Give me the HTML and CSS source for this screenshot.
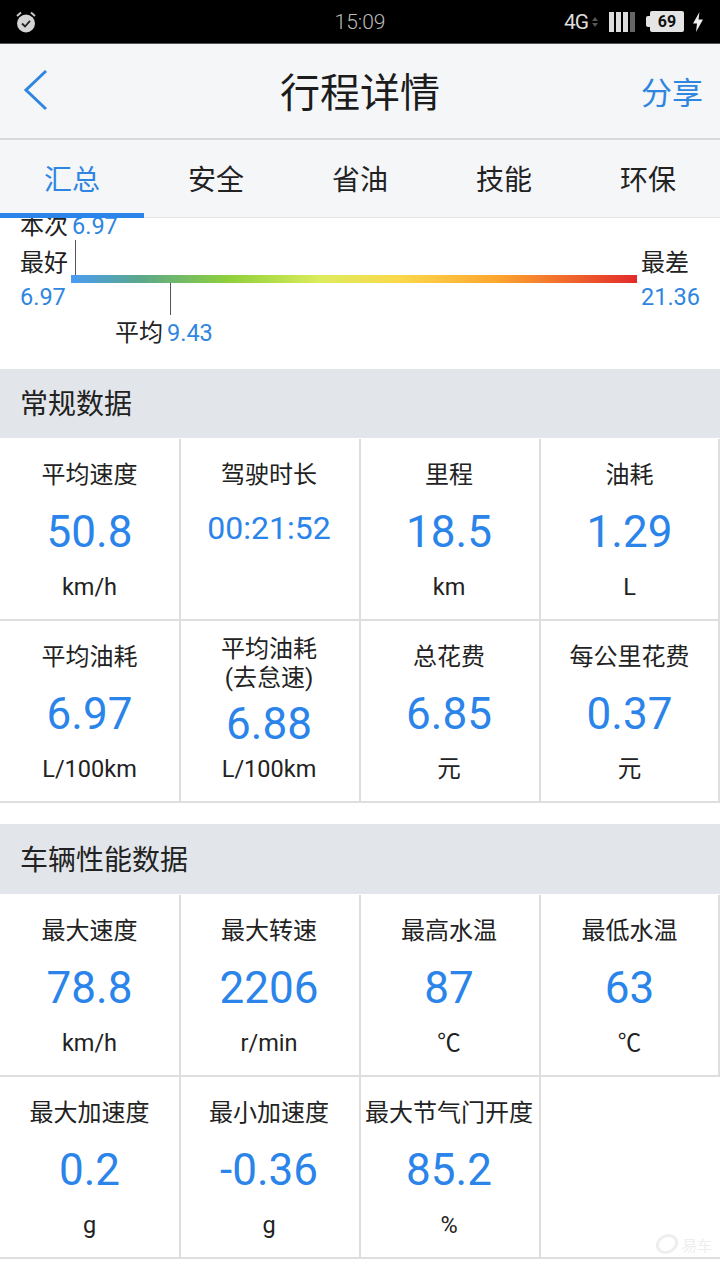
FILE: index.html
```html
<!DOCTYPE html>
<html lang="zh-CN">
<head>
    <meta charset="UTF-8">
    <meta name="viewport" content="width=device-width, initial-scale=1.0">
    <title>行程详情</title>
    <link rel="stylesheet" href="styles.css">
</head>
<body>

<div class="status-bar">
    <svg class="alarm" width="22" height="24" viewBox="0 0 22 24">
        <path d="M2 6 L6 2.5 M20 6 L16 2.5" stroke="#c8c8c8" stroke-width="2" fill="none"/>
        <circle cx="11" cy="13.5" r="9" fill="#d4d4d4"/>
        <path d="M7 13.5 L10 16.5 L15 10.8" stroke="#222" stroke-width="1.8" fill="none"/>
    </svg>
    <span class="clock">15:09</span>
    <div class="status-right">
        <span class="net">4G</span>
        <svg width="8" height="12" viewBox="0 0 8 12">
            <path d="M4 1 L7 5 H1 Z M4 11 L1 7 H7 Z" fill="#555"/>
        </svg>
        <div class="signal">
            <i></i><i></i><i></i><i class="dim"></i>
        </div>
        <div class="battery"><span>69</span></div>
        <svg class="bolt" width="10" height="20" viewBox="0 0 10 20">
            <path d="M6.5 0 L0 11.5 H4 L3 20 L10 7.5 H5.5 Z" fill="#eee"/>
        </svg>
    </div>
</div>

<div class="header">
    <svg class="back" width="26" height="42" viewBox="0 0 26 42">
        <path d="M23 2 L3 21 L23 40" stroke="#2f86e0" stroke-width="3" fill="none"/>
    </svg>
    <h1>行程详情</h1>
    <span class="share">分享</span>
</div>

<div class="tabs">
    <div class="tab active">汇总</div>
    <div class="tab">安全</div>
    <div class="tab">省油</div>
    <div class="tab">技能</div>
    <div class="tab">环保</div>
</div>

<!-- scale is cut off at the top, the first label is half hidden under the tabs -->
<div class="scale">
    <div class="mark mark-now"><b>本次</b><em>6.97</em></div>
    <div class="tick tick-now"></div>
    <div class="mark mark-best"><b>最好</b><em>6.97</em></div>
    <div class="bar"></div>
    <div class="mark mark-worst"><b>最差</b><em>21.36</em></div>
    <div class="tick tick-avg"></div>
    <div class="mark mark-avg"><b>平均</b><em>9.43</em></div>
</div>

<div class="section-title">常规数据</div>
<div class="grid">
    <div class="cell"><div class="label">平均速度</div><div class="value">50.8</div><div class="unit">km/h</div></div>
    <div class="cell"><div class="label">驾驶时长</div><div class="value value-small">00:21:52</div><div class="unit"></div></div>
    <div class="cell"><div class="label">里程</div><div class="value">18.5</div><div class="unit">km</div></div>
    <div class="cell"><div class="label">油耗</div><div class="value">1.29</div><div class="unit">L</div></div>
    <div class="cell"><div class="label">平均油耗</div><div class="value">6.97</div><div class="unit">L/100km</div></div>
    <div class="cell cell-two"><div class="label">平均油耗<br>(去怠速)</div><div class="value">6.88</div><div class="unit">L/100km</div></div>
    <div class="cell"><div class="label">总花费</div><div class="value">6.85</div><div class="unit">元</div></div>
    <div class="cell"><div class="label">每公里花费</div><div class="value">0.37</div><div class="unit">元</div></div>
</div>

<div class="section-title section-gap">车辆性能数据</div>
<div class="grid">
    <div class="cell"><div class="label">最大速度</div><div class="value">78.8</div><div class="unit">km/h</div></div>
    <div class="cell"><div class="label">最大转速</div><div class="value">2206</div><div class="unit">r/min</div></div>
    <div class="cell"><div class="label">最高水温</div><div class="value">87</div><div class="unit">℃</div></div>
    <div class="cell"><div class="label">最低水温</div><div class="value">63</div><div class="unit">℃</div></div>
    <div class="cell"><div class="label">最大加速度</div><div class="value">0.2</div><div class="unit">g</div></div>
    <div class="cell"><div class="label">最小加速度</div><div class="value">-0.36</div><div class="unit">g</div></div>
    <div class="cell"><div class="label">最大节气门开度</div><div class="value">85.2</div><div class="unit">%</div></div>
    <div class="cell cell-empty"></div>
</div>

<!-- faint watermark over the bottom corner -->
<div class="watermark">
    <svg width="26" height="24" viewBox="0 0 26 24">
        <ellipse cx="13" cy="12" rx="10" ry="8" stroke="#eeeeee" stroke-width="3" fill="none" transform="rotate(-25 13 12)"/>
    </svg>
    <span>易车</span>
</div>

</body>
</html>
```

FILE: styles.css
```css
* {
    box-sizing: border-box;
}

html, body {
    margin: 0;
    padding: 0;
}

body {
    position: relative;
    width: 720px;
    height: 1280px;
    overflow: hidden;
    background-color: #fff;
    color: #222;
    font-family: Roboto, "Noto Sans CJK SC", sans-serif;
}

.status-bar {
    position: relative;
    display: flex;
    align-items: center;
    justify-content: space-between;
    height: 44px;
    padding: 0 17px 0 15px;
    background-color: #000;
    border-bottom: 1px solid #555;
}

.clock {
    position: absolute;
    left: 0;
    right: 0;
    text-align: center;
    font-size: 21px;
    font-weight: 300;
    color: #bbb;
}

.status-right {
    display: flex;
    align-items: center;
    gap: 3px;
}

.net {
    font-size: 21px;
    color: #ddd;
    letter-spacing: -1px;
}

.signal {
    display: flex;
    gap: 2px;
    height: 20px;
    margin: 0 12px 0 7px;
}

.signal i {
    display: block;
    width: 5px;
    background-color: #ddd;
}

.signal i.dim {
    background-color: #666;
}

.battery {
    position: relative;
    display: flex;
    align-items: center;
    justify-content: center;
    width: 34px;
    height: 21px;
    margin-right: 6px;
    background-color: #e4e4e4;
    border-radius: 2px;
    font-size: 16px;
    font-weight: 700;
    color: #111;
}

/* battery nub, on the left side as the phone draws it */
.battery::before {
    content: "";
    position: absolute;
    left: -4px;
    top: 5px;
    width: 4px;
    height: 11px;
    background-color: #e4e4e4;
    border-radius: 2px 0 0 2px;
}

.header {
    position: relative;
    display: flex;
    align-items: center;
    justify-content: space-between;
    height: 96px;
    padding: 0 17px 2px 23px;
    background-color: #f5f6f8;
    border-bottom: 2px solid #d9d9d9;
}

.header h1 {
    position: absolute;
    left: 0;
    right: 0;
    margin: 0;
    text-align: center;
    font-size: 40px;
    font-weight: 400;
    color: #1c1c1c;
}

.share {
    font-size: 31px;
    color: #2f86e0;
}

.tabs {
    position: relative;
    display: flex;
    height: 78px;
    background-color: #f5f6f8;
    border-bottom: 1px solid #e4e4e4;
}

.tab {
    flex: 1;
    height: 78px;
    padding-top: 21px;
    text-align: center;
    font-size: 28px;
    line-height: 40px;
    color: #222;
}

.tab.active {
    color: #2f86e0;
    border-bottom: 5px solid #2a84ea;
}

.scale {
    position: relative;
    height: 151px;
    overflow: hidden;
    background-color: #fff;
}

.mark {
    position: absolute;
    font-size: 23.5px;
    line-height: 34px;
}

.mark b {
    font-size: 24px;
    font-weight: 400;
}

.mark em {
    font-style: normal;
    color: #2f86e0;
}

.mark-now em, .mark-avg em {
    margin-left: 4px;
}

.mark-now {
    left: 20px;
    top: -9px;
}

.mark-best {
    left: 20px;
    top: 28px;
}

.mark-worst {
    left: 641px;
    top: 28px;
}

.mark-best b, .mark-best em, .mark-worst b, .mark-worst em {
    display: block;
}

.mark-avg {
    left: 115px;
    top: 98px;
}

.tick {
    position: absolute;
    width: 1px;
    background-color: #555;
}

.tick-now {
    left: 75px;
    top: 22px;
    height: 35px;
}

.tick-avg {
    left: 170px;
    top: 65px;
    height: 32px;
}

.bar {
    position: absolute;
    left: 71px;
    top: 57px;
    width: 566px;
    height: 8px;
    background: linear-gradient(to right, #4a9cf5 0%, #5aa78c 12%, #8fd03a 28%, #dcec5c 44%, #fbd84c 58%, #fca72f 75%, #ee5d2c 90%, #e22a2a 100%);
}

.section-title {
    height: 69px;
    padding-left: 20px;
    background-color: #e2e6ea;
    font-size: 28px;
    line-height: 72px;
    color: #222;
}

.section-gap {
    margin-top: 21px;
    height: 70px;
    line-height: 73px;
}

.grid {
    display: grid;
    grid-template-columns: 181px 180px 180px 179px;
    grid-auto-rows: 182px;
    padding-top: 1px;
}

.cell {
    display: flex;
    flex-direction: column;
    align-items: center;
    padding: 18px 2px 16px 0;
    border-right: 2px solid #dedede;
    border-bottom: 2px solid #dedede;
    text-align: center;
}

.cell:nth-child(4n+1), .cell:nth-child(4n) {
    padding-right: 0;
}

.cell-empty {
    border-right: 0;
}

.cell-two {
    padding-top: 14px;
}

.label {
    font-size: 24px;
    line-height: 36px;
    color: #222;
}

.cell-two .label {
    line-height: 29px;
}

.value {
    flex: 1;
    display: flex;
    align-items: center;
    font-size: 44px;
    color: #2a84ea;
}

.cell-two .value {
    padding-top: 2px;
}

.value-small {
    font-size: 32px;
    padding-bottom: 8px;
}

.unit {
    height: 32px;
    font-size: 23.5px;
    line-height: 32px;
    color: #222;
}

.watermark {
    position: absolute;
    right: 8px;
    bottom: 24px;
    display: flex;
    align-items: center;
    gap: 2px;
    font-size: 15px;
    color: #eeeeee;
}
```
